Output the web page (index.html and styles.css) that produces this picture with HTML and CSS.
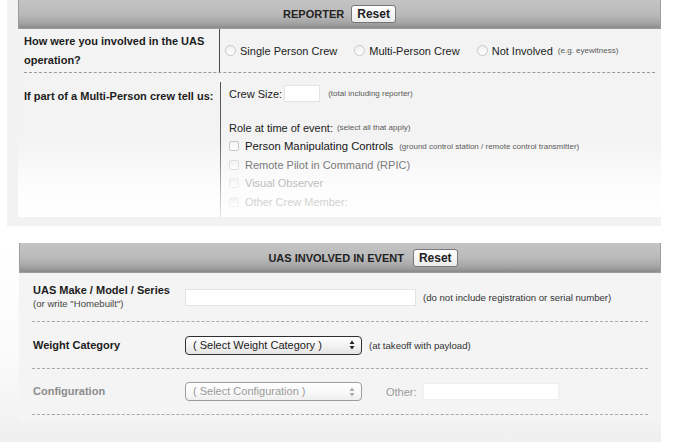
FILE: index.html
```html
<!DOCTYPE html>
<html lang="en">
<head>
<meta charset="utf-8">
<title>UAS Report</title>
<link rel="stylesheet" href="styles.css">
</head>
<body>
<div class="frame1">
  <section class="panel panel1">
    <div class="phead">
      <span class="ptitle">REPORTER</span>
      <button class="reset" type="button">Reset</button>
    </div>
    <div class="pbody1">
      <div class="row1">
        <div class="lab1">How were you involved in the UAS operation?</div>
        <div class="opts">
          <label class="opt"><span class="radio"></span>Single Person Crew</label>
          <label class="opt"><span class="radio"></span>Multi-Person Crew</label>
          <label class="opt"><span class="radio"></span>Not Involved<span class="hint">(e.g. eyewitness)</span></label>
        </div>
      </div>
      <div class="row2">
        <div class="lab2">If part of a Multi-Person crew tell us:</div>
        <div class="val2">
          <div class="crewline">Crew Size:<span class="inp crew"></span><span class="hint">(total including reporter)</span></div>
          <div class="roleline">Role at time of event:<span class="hint">(select all that apply)</span></div>
          <div class="chk c1"><span class="box"></span>Person Manipulating Controls<span class="hint">(ground control station / remote control transmitter)</span></div>
          <div class="chk c2"><span class="box"></span>Remote Pilot in Command (RPIC)</div>
          <div class="chk c3"><span class="box"></span>Visual Observer</div>
          <div class="chk c4"><span class="box"></span>Other Crew Member:</div>
        </div>
      </div>
    </div>
  </section>
</div>

<div class="frame2">
  <section class="panel panel2">
    <div class="phead phead2">
      <span class="ptitle">UAS INVOLVED IN EVENT</span>
      <button class="reset" type="button">Reset</button>
    </div>
    <div class="pbody2">
      <div class="frow rowa">
        <div class="flab"><b>UAS Make / Model / Series</b><span class="sub">(or write "Homebuilt")</span></div>
        <span class="inp make"></span>
        <span class="note">(do not include registration or serial number)</span>
      </div>
      <div class="frow rowb">
        <div class="flab"><b>Weight Category</b></div>
        <div class="sel">( Select Weight Category )
          <svg class="arr" width="6" height="10" viewBox="0 0 6 10"><path d="M0.5 4 L3 0.5 L5.5 4 Z M0.5 6 L5.5 6 L3 9.5 Z" fill="currentColor"/></svg>
        </div>
        <span class="note">(at takeoff with payload)</span>
      </div>
      <div class="frow rowc">
        <div class="flab dim"><b>Configuration</b></div>
        <div class="sel seldim">( Select Configuration )
          <svg class="arr" width="6" height="10" viewBox="0 0 6 10"><path d="M0.5 4 L3 0.5 L5.5 4 Z M0.5 6 L5.5 6 L3 9.5 Z" fill="currentColor"/></svg>
        </div>
        <span class="other">Other:</span>
        <span class="inp otherinp"></span>
      </div>
    </div>
  </section>
</div>
</body>
</html>
```

FILE: styles.css
```css
* { box-sizing: border-box; }

body {
  margin: 0;
  background: #fff;
  font-family: "Liberation Sans", Arial, Helvetica, sans-serif;
  font-size: 11px;
  color: #1c1c1c;
}

/* ---------- shared panel parts ---------- */
.phead {
  height: 29px;
  display: flex;
  align-items: center;
  justify-content: center;
  gap: 7px;
  background: linear-gradient(to bottom, #c4c4c4 0%, #bababa 50%, #a6a6a6 80%, #8b8b8b 100%);
  border: 1px solid #9c9c9c;
  border-top: none;
}

.ptitle {
  font-weight: bold;
  font-size: 11px;
  color: #222;
}

.reset {
  font: bold 12px "Liberation Sans", Arial, sans-serif;
  color: #222;
  height: 18px;
  padding: 0 5px;
  border: 1px solid #777;
  border-radius: 3px;
  background: linear-gradient(to bottom, #ffffff, #ebebeb);
}

.hint {
  font-size: 8px;
  color: #5a5a5a;
  margin-left: 5px;
}

.inp {
  display: inline-block;
  background: #fff;
  border: 1px solid #e4e4e4;
  height: 17px;
}

/* ---------- panel 1 ---------- */
.frame1 {
  width: 654px;
  margin-left: 7px;
  padding: 0 0 9px 11px;
  background: #f2f2f2;
}

.panel1 { width: 643px; }

.pbody1 {
  height: 188px;
  background: linear-gradient(to bottom, #f3f3f3 0%, #f3f3f3 58%, #fcfcfc 82%, #ffffff 100%);
}

.row1 {
  display: flex;
  height: 44px;
  margin: 0 6px;
  border-bottom: 1px dashed #9a9a9a;
}

.lab1 {
  width: 196px;
  flex: none;
  padding: 3px 0;
  font-weight: bold;
  line-height: 19px;
  border-right: 1px solid #4a4a4a;
}

.opts {
  display: flex;
  align-items: center;
  padding-left: 5px;
}

.opt {
  display: flex;
  align-items: center;
  margin-right: 17px;
  color: #1c1c1c;
}

.radio {
  width: 11px;
  height: 11px;
  border-radius: 50%;
  border: 1px solid #c8c8c8;
  background: linear-gradient(to bottom, #f0f0f0, #ffffff);
  margin-right: 4px;
}

.row2 {
  display: flex;
  height: 144px;
  margin: 0 6px;
}

.lab2 {
  width: 196px;
  flex: none;
  padding-top: 14px;
  font-weight: bold;
  line-height: 19px;
}

.val2 {
  margin-top: 9px;
  padding: 2px 0 0 8px;
  border-left: 1px solid #666;
  border-image: linear-gradient(to bottom, #555 0%, #666 45%, #e6e6e6 100%) 1;
  flex: 1;
}

.crewline {
  display: flex;
  align-items: center;
  height: 19px;
  color: #222;
}

.crew {
  width: 36px;
  margin-left: 2px;
}

.crewline .hint { margin-left: 8px; }

.roleline {
  display: flex;
  align-items: center;
  height: 19px;
  margin-top: 15px;
  color: #222;
}

.roleline .hint { margin-left: 4px; }

.chk {
  display: flex;
  align-items: center;
  height: 18.5px;
}

.box {
  width: 10px;
  height: 10px;
  border: 1px solid #c9c9c9;
  border-radius: 2px;
  background: linear-gradient(to bottom, #f2f2f2, #fff);
  margin-right: 6px;
}

.c1 { color: #151515; font-size: 11.3px; }
.c1 .hint { margin-left: 6px; }
.c2 { color: #7a7a7a; }
.c2 .box { border-color: #dedede; }
.c3 { color: #bdbdbd; }
.c3 .box { border-color: #ececec; }
.c4 { color: #d2d2d2; }
.c4 .box { border-color: #f3f3f3; }

/* ---------- panel 2 ---------- */
.frame2 {
  width: 661px;
  margin-top: 17px;
  padding: 0 0 20px 19px;
  background: linear-gradient(to bottom, #ffffff 0%, #fafafa 60%, #efefef 100%);
}

.panel2 { width: 642px; }

.phead2 {
  height: 30px;
  gap: 9px;
  padding-left: 46px;
}

.pbody2 {
  height: 149px;
  padding: 0 13px;
  background: #f4f4f4;
}

.frow {
  display: flex;
  align-items: center;
  border-bottom: 1px dashed #a8a8a8;
}

.rowa { height: 49px; }
.rowb { height: 47px; }
.rowc { height: 46px; }

.flab {
  width: 153px;
  flex: none;
  padding-left: 1px;
  display: flex;
  flex-direction: column;
}

.flab b {
  font-size: 11px;
  line-height: 13px;
}

.sub {
  font-size: 9.6px;
  line-height: 13px;
  color: #444;
}

.make { width: 231px; }

.note {
  font-size: 9.6px;
  color: #333;
  margin-left: 7px;
}

.sel {
  position: relative;
  width: 177px;
  height: 19px;
  padding-left: 7px;
  line-height: 17px;
  border: 1.5px solid #303030;
  border-radius: 4px;
  background: linear-gradient(to bottom, #ffffff 0%, #f3f3f3 50%, #e4e4e4 100%);
  color: #1c1c1c;
}

.arr {
  position: absolute;
  right: 6px;
  top: 3.5px;
  color: #222;
}

.dim { color: #8c8c8c; }

.seldim {
  border: 1px solid #9c9c9c;
  color: #9a9a9a;
  background: linear-gradient(to bottom, #ffffff 0%, #f8f8f8 60%, #efefef 100%);
}

.seldim .arr { color: #aaa; top: 4px; }

.other {
  margin-left: 24px;
  color: #9a9a9a;
}

.otherinp {
  width: 136px;
  margin-left: 6px;
  border-color: #efefef;
}
```
